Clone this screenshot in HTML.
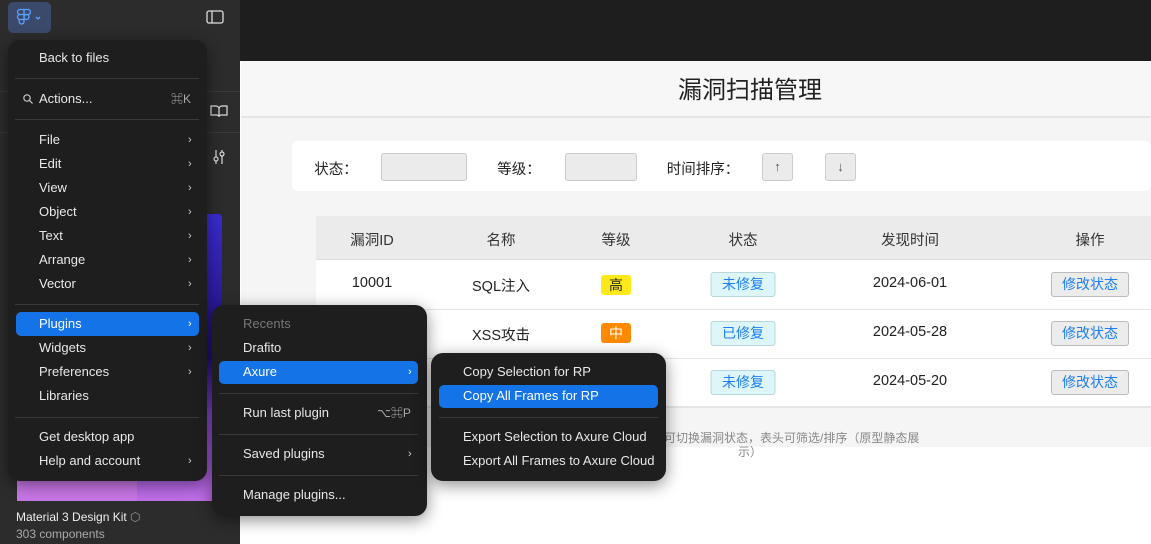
<!DOCTYPE html>
<html><head><meta charset="utf-8"><style>
*{margin:0;padding:0;box-sizing:border-box}
body{width:1151px;height:544px;overflow:hidden;position:relative;background:#fff;font-family:"Liberation Sans","Noto Sans CJK SC",sans-serif}
.abs{position:absolute}
.left{left:0;top:0;width:240px;height:544px;background:#2c2c2c}
.menu{position:absolute;background:#1e1e1e;border-radius:12px;box-shadow:0 4px 16px rgba(0,0,0,.45);color:#e8e8e8;font-size:13px}
.it{position:absolute;height:24px;line-height:24px;white-space:nowrap}
.hl{position:absolute;background:#1473e6;border-radius:5px}
.sep{position:absolute;height:1px;background:#3a3a3a}
.ch{position:absolute;color:#ccc;font-size:11px;line-height:24px}
.c{position:absolute;text-align:center;transform:translateX(-50%);white-space:nowrap;font-size:14.5px;color:#222}
.tag{position:absolute;transform:translateX(-50%);border-radius:3px;text-align:center;font-size:14px}
</style></head><body>
<div class="abs" style="left:240px;top:0;width:911px;height:61px;background:#1e1e1e"></div>
<div class="abs" style="left:241px;top:61px;width:910px;height:386px;background:#f5f5f5"></div>
<div class="abs" style="left:241px;top:62px;width:910px;height:56px;background:#f7f7f7;border-bottom:2px solid #e6e6e6"></div>
<div class="c" style="left:750px;top:70px;font-size:24px;color:#222">漏洞扫描管理</div>
<div class="abs" style="left:292px;top:141px;width:859px;height:50px;background:#fff;border-radius:6px"></div>
<div class="c" style="left:336px;top:158px">状态：</div>
<div class="abs" style="left:381px;top:153px;width:86px;height:28px;background:#ebebeb;border:1px solid #ccc;border-radius:3px"></div>
<div class="c" style="left:519px;top:158px">等级：</div>
<div class="abs" style="left:565px;top:153px;width:72px;height:28px;background:#ebebeb;border:1px solid #ccc;border-radius:3px"></div>
<div class="c" style="left:703px;top:158px">时间排序：</div>
<div class="abs" style="left:762px;top:153px;width:31px;height:28px;background:#ebebeb;border:1px solid #ccc;border-radius:3px;text-align:center;line-height:26px;font-size:13px;color:#555">↑</div>
<div class="abs" style="left:825px;top:153px;width:31px;height:28px;background:#ebebeb;border:1px solid #ccc;border-radius:3px;text-align:center;line-height:26px;font-size:13px;color:#555">↓</div>
<div class="abs" style="left:316px;top:216px;width:835px;height:44px;background:#ebebeb;border-bottom:1px solid #ddd"></div>
<div class="abs" style="left:316px;top:260px;width:835px;height:147px;background:#fff"></div>
<div class="abs" style="left:316px;top:309px;width:835px;height:1px;background:#e6e6e6"></div>
<div class="abs" style="left:316px;top:358px;width:835px;height:1px;background:#e6e6e6"></div>
<div class="abs" style="left:316px;top:406px;width:835px;height:2px;background:#e6e6e6"></div>
<div class="c" style="left:372px;top:229px;color:#333">漏洞ID</div>
<div class="c" style="left:501px;top:229px;color:#333">名称</div>
<div class="c" style="left:616px;top:229px;color:#333">等级</div>
<div class="c" style="left:743px;top:229px;color:#333">状态</div>
<div class="c" style="left:910px;top:229px;color:#333">发现时间</div>
<div class="c" style="left:1090px;top:229px;color:#333">操作</div>
<div class="c" style="left:372px;top:275px">10001</div>
<div class="c" style="left:501px;top:275px">SQL注入</div>
<div class="tag" style="left:616px;top:275px;width:30px;height:20px;line-height:20px;background:#ffe81a;color:#222">高</div>
<div class="tag" style="left:743px;top:272px;width:65px;height:25px;line-height:23px;background:#dcf6f9;border:1px solid #b8d6dc;color:#1e7ef0">未修复</div>
<div class="c" style="left:910px;top:275px">2024-06-01</div>
<div class="tag" style="left:1090px;top:272px;width:78px;height:25px;line-height:23px;background:#ececec;border:1px solid #bbb;color:#1e7ef0">修改状态</div>
<div class="c" style="left:501px;top:324px">XSS攻击</div>
<div class="tag" style="left:616px;top:323px;width:30px;height:20px;line-height:20px;background:#ff8a00;color:#fff">中</div>
<div class="tag" style="left:743px;top:321px;width:65px;height:25px;line-height:23px;background:#dcf6f9;border:1px solid #b8d6dc;color:#1e7ef0">已修复</div>
<div class="c" style="left:910px;top:324px">2024-05-28</div>
<div class="tag" style="left:1090px;top:321px;width:78px;height:25px;line-height:23px;background:#ececec;border:1px solid #bbb;color:#1e7ef0">修改状态</div>
<div class="tag" style="left:743px;top:370px;width:65px;height:25px;line-height:23px;background:#dcf6f9;border:1px solid #b8d6dc;color:#1e7ef0">未修复</div>
<div class="c" style="left:910px;top:373px">2024-05-20</div>
<div class="tag" style="left:1090px;top:370px;width:78px;height:25px;line-height:23px;background:#ececec;border:1px solid #bbb;color:#1e7ef0">修改状态</div>
<div class="abs" style="left:664px;top:431px;font-size:12px;color:#888;line-height:14px">可切换漏洞状态，表头可筛选/排序（原型静态展</div>
<div class="abs" style="left:738px;top:445px;font-size:12px;color:#888;line-height:14px">示）</div>

<div class="abs left"></div>
<div class="abs" style="left:0;top:91px;width:240px;height:1px;background:#3a3a3a"></div>
<div class="abs" style="left:0;top:132px;width:240px;height:1px;background:#3a3a3a"></div>
<div class="abs" style="left:8px;top:2px;width:43px;height:31px;background:#3b4a6b;border-radius:5px"></div>
<svg class="abs" style="left:16px;top:8px" width="30" height="20" viewBox="0 0 30 20" fill="none" stroke="#5aa2ff" stroke-width="1.3"><path d="M4 1.5h4v5H4a2.5 2.5 0 0 1 0-5z M8 1.5h4a2.5 2.5 0 0 1 0 5H8z M4 6.5h4v5H4a2.5 2.5 0 0 1 0-5z M4 11.5h4V14a2.5 2.5 0 1 1-4-2.5z"/><circle cx="10.5" cy="9" r="2.5"/><path d="M20 9l2 2 2-2"/></svg>
<svg class="abs" style="left:206px;top:10px" width="18" height="14" fill="none" stroke="#ddd" stroke-width="1.3"><rect x="1" y="1" width="16" height="12" rx="2"/><path d="M6 1v12"/></svg>
<svg class="abs" style="left:210px;top:104px" width="18" height="14" fill="none" stroke="#ddd" stroke-width="1.2"><path d="M1 2h5a3 3 0 0 1 3 3v8a2 2 0 0 0-2-2H1z M17 2h-5a3 3 0 0 0-3 3v8a2 2 0 0 1 2-2h6z"/></svg>
<svg class="abs" style="left:212px;top:149px" width="14" height="16" fill="none" stroke="#ddd" stroke-width="1.2"><path d="M4 1v14M10 1v14"/><circle cx="4" cy="10" r="2" fill="#2c2c2c"/><circle cx="10" cy="5" r="2" fill="#2c2c2c"/></svg>
<div class="abs" style="left:17px;top:214px;width:205px;height:287px;border-radius:4px;background:linear-gradient(180deg,#3a2bd0 0%,#22107a 50%,#8a48d8 70%,#c06ee8 100%)"></div>
<div class="abs" style="left:17px;top:478px;width:120px;height:23px;background:#c876e6"></div>
<div class="abs" style="left:16px;top:510px;font-size:12px;color:#eee">Material 3 Design Kit <span style="color:#999">⬡</span></div>
<div class="abs" style="left:16px;top:527px;font-size:12px;color:#aaa">303 components</div>

<div class="menu" style="left:8px;top:40px;width:199px;height:441px">
<div class="it" style="left:31px;top:6px">Back to files</div>
<div class="sep" style="left:7px;top:38px;width:184px"></div>
<svg class="abs" style="left:15px;top:54px" width="10" height="10" fill="none" stroke="#ccc" stroke-width="1.2"><circle cx="4" cy="4" r="3.2"/><path d="M6.5 6.5L9.5 9.5"/></svg>
<div class="it" style="left:31px;top:47px">Actions...</div>
<div class="it" style="left:163px;top:47px;color:#aaa;font-size:12px">⌘K</div>
<div class="sep" style="left:7px;top:79px;width:184px"></div>
<div class="it" style="left:31px;top:88px">File</div><div class="ch" style="left:180px;top:88px">›</div>
<div class="it" style="left:31px;top:112px">Edit</div><div class="ch" style="left:180px;top:112px">›</div>
<div class="it" style="left:31px;top:136px">View</div><div class="ch" style="left:180px;top:136px">›</div>
<div class="it" style="left:31px;top:160px">Object</div><div class="ch" style="left:180px;top:160px">›</div>
<div class="it" style="left:31px;top:184px">Text</div><div class="ch" style="left:180px;top:184px">›</div>
<div class="it" style="left:31px;top:208px">Arrange</div><div class="ch" style="left:180px;top:208px">›</div>
<div class="it" style="left:31px;top:232px">Vector</div><div class="ch" style="left:180px;top:232px">›</div>
<div class="sep" style="left:7px;top:264px;width:184px"></div>
<div class="hl" style="left:8px;top:272px;width:183px;height:24px"></div>
<div class="it" style="left:31px;top:272px;color:#fff">Plugins</div><div class="ch" style="left:180px;top:272px;color:#fff">›</div>
<div class="it" style="left:31px;top:296px">Widgets</div><div class="ch" style="left:180px;top:296px">›</div>
<div class="it" style="left:31px;top:320px">Preferences</div><div class="ch" style="left:180px;top:320px">›</div>
<div class="it" style="left:31px;top:344px">Libraries</div>
<div class="sep" style="left:7px;top:377px;width:184px"></div>
<div class="it" style="left:31px;top:385px">Get desktop app</div>
<div class="it" style="left:31px;top:409px">Help and account</div><div class="ch" style="left:180px;top:409px">›</div>
</div>

<div class="menu" style="left:212px;top:305px;width:215px;height:211px">
<div class="it" style="left:31px;top:7px;color:#777">Recents</div>
<div class="it" style="left:31px;top:31px">Drafito</div>
<div class="hl" style="left:7px;top:56px;width:199px;height:23px"></div>
<div class="it" style="left:31px;top:55px;color:#fff">Axure</div><div class="ch" style="left:196px;top:55px;color:#fff">›</div>
<div class="sep" style="left:7px;top:88px;width:199px"></div>
<div class="it" style="left:31px;top:96px">Run last plugin</div><div class="it" style="left:165px;top:96px;color:#aaa;font-size:12px">⌥⌘P</div>
<div class="sep" style="left:7px;top:129px;width:199px"></div>
<div class="it" style="left:31px;top:137px">Saved plugins</div><div class="ch" style="left:196px;top:137px">›</div>
<div class="sep" style="left:7px;top:170px;width:199px"></div>
<div class="it" style="left:31px;top:178px">Manage plugins...</div>
</div>

<div class="menu" style="left:431px;top:353px;width:235px;height:128px">
<div class="it" style="left:32px;top:7px">Copy Selection for RP</div>
<div class="hl" style="left:8px;top:32px;width:219px;height:23px"></div>
<div class="it" style="left:32px;top:31px;color:#fff">Copy All Frames for RP</div>
<div class="sep" style="left:8px;top:64px;width:219px"></div>
<div class="it" style="left:32px;top:72px">Export Selection to Axure Cloud</div>
<div class="it" style="left:32px;top:96px">Export All Frames to Axure Cloud</div>
</div>
</body></html>
